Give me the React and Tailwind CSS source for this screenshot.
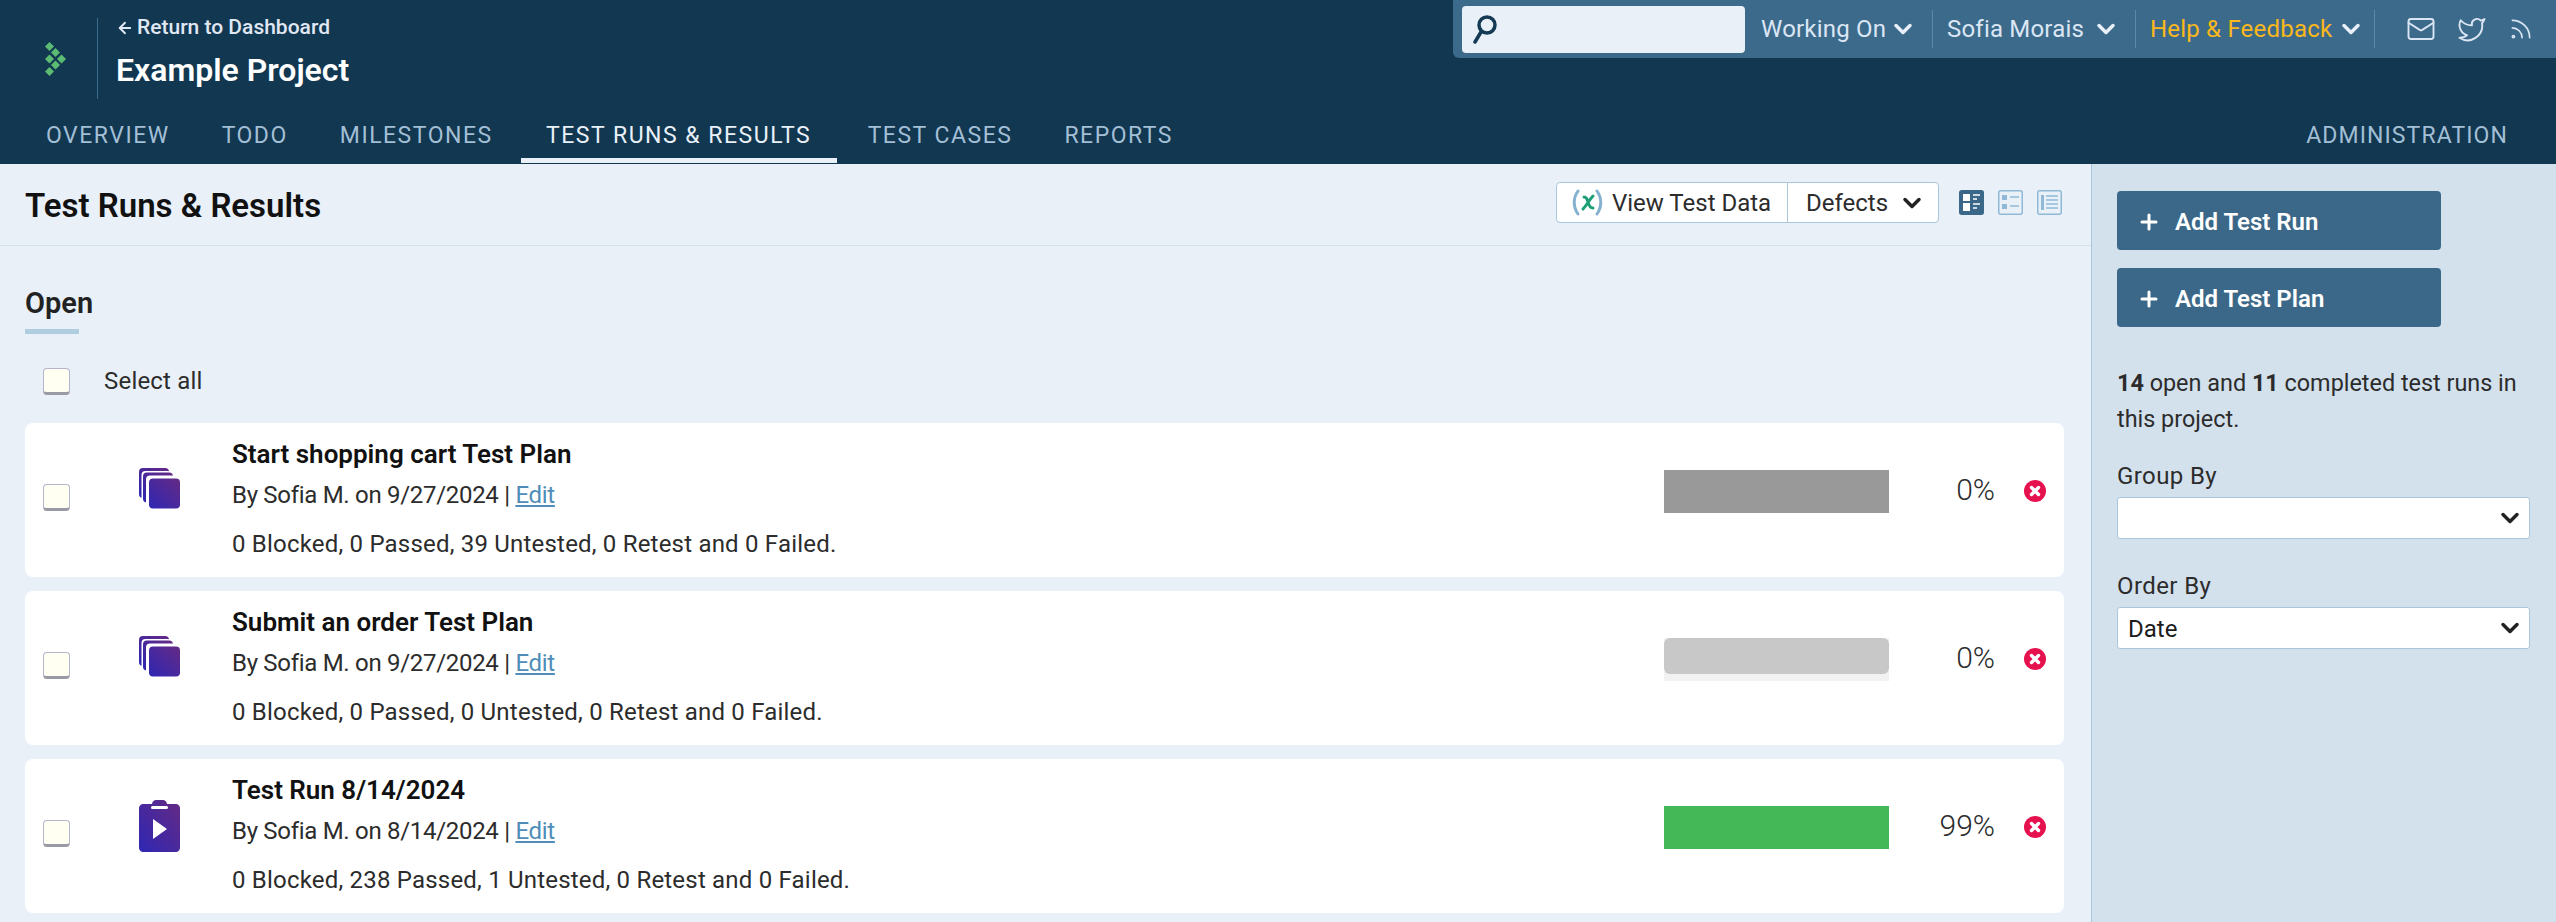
import React from 'react';
import { ChevronDown, Plus, Mail, Twitter, Rss, ArrowLeft } from 'lucide-react';

const tabs = ['OVERVIEW', 'TODO', 'MILESTONES', 'TEST RUNS & RESULTS', 'TEST CASES', 'REPORTS'];

const runs = [
  {
    title: 'Start shopping cart Test Plan',
    by: 'By Sofia M. on 9/27/2024',
    stats: '0 Blocked, 0 Passed, 39 Untested, 0 Retest and 0 Failed.',
    percent: '0%',
    type: 'plan',
    bar: 'dark',
  },
  {
    title: 'Submit an order Test Plan',
    by: 'By Sofia M. on 9/27/2024',
    stats: '0 Blocked, 0 Passed, 0 Untested, 0 Retest and 0 Failed.',
    percent: '0%',
    type: 'plan',
    bar: 'light',
  },
  {
    title: 'Test Run 8/14/2024',
    by: 'By Sofia M. on 8/14/2024',
    stats: '0 Blocked, 238 Passed, 1 Untested, 0 Retest and 0 Failed.',
    percent: '99%',
    type: 'run',
    bar: 'green',
  },
];

const Logo = () => (
  <svg width="21" height="34" viewBox="0 0 21 34" className="fill-[#5cbb72]">
    <path d="M4.5 0L9 4.5 4.5 9 0 4.5z" />
    <path d="M10.5 6L15 10.5 10.5 15 6 10.5z" />
    <path d="M4.5 12.5L9 17 4.5 21.5 0 17z" />
    <path d="M16.5 12.5L21 17 16.5 21.5 12 17z" />
    <path d="M10.5 18.5L15 23 10.5 27.5 6 23z" />
    <path d="M4.5 25L9 29.5 4.5 34 0 29.5z" />
  </svg>
);

const SearchIcon = () => (
  <svg width="30" height="30" viewBox="0 0 30 30" fill="none" stroke="#143a54" strokeWidth="3.5">
    <circle cx="17" cy="11" r="8" />
    <path d="M11 18L5 28" strokeLinecap="round" />
  </svg>
);

const FormulaIcon = () => (
  <svg width="31" height="27" viewBox="0 0 31 27" fill="none" strokeLinecap="round">
    <path d="M6 2C1 9 1 18 6 25" stroke="#85b1d0" strokeWidth="3" />
    <path d="M25 2c5 7 5 16 0 23" stroke="#85b1d0" strokeWidth="3" />
    <path d="M11 20C15 16 17 11 21 7M12 8c2 0 3 1 4 5s2 6 5 6" stroke="#1c9f76" strokeWidth="3" />
  </svg>
);

const PlanIcon = ({ id }) => (
  <svg width="41" height="41" viewBox="0 0 41 41">
    <defs>
      <linearGradient id={id} x1="1" y1="0" x2="0" y2="1">
        <stop offset="0" stopColor="#652a84" />
        <stop offset="1" stopColor="#2e27b4" />
      </linearGradient>
    </defs>
    <rect x="0" y="0" width="30" height="30" rx="4" fill={`url(#${id})`} />
    <rect x="2.5" y="3" width="30" height="32" rx="4" fill="#fff" />
    <rect x="4" y="4.5" width="30" height="30" rx="4" fill={`url(#${id})`} />
    <rect x="7" y="7.5" width="30" height="32" rx="4" fill="#fff" />
    <rect x="10" y="10.5" width="31" height="30" rx="4" fill={`url(#${id})`} />
  </svg>
);

const RunIcon = ({ id }) => (
  <svg width="41" height="52" viewBox="0 0 41 52">
    <defs>
      <linearGradient id={id} x1="1" y1="0" x2="0" y2="1">
        <stop offset="0" stopColor="#652a84" />
        <stop offset="1" stopColor="#2e27b4" />
      </linearGradient>
    </defs>
    <path
      d="M4 4h9c0-2 2-4 4-4h7c2 0 4 2 4 4h9c2 0 4 2 4 4v40c0 2-2 4-4 4H4c-2 0-4-2-4-4V8c0-2 2-4 4-4z"
      fill={`url(#${id})`}
    />
    <rect x="12" y="6" width="17" height="3" rx="1.5" fill="#fff" />
    <path d="M14 19l14 10-14 10z" fill="#fff" />
  </svg>
);

const CloseIcon = () => (
  <svg width="22" height="22" viewBox="0 0 22 22">
    <circle cx="11" cy="11" r="11" fill="#e6114f" />
    <path d="M7.5 7.5l7 7M14.5 7.5l-7 7" stroke="#fff" strokeWidth="3.4" strokeLinecap="round" />
  </svg>
);

const Checkbox = () => (
  <div className="h-[27px] w-[27px] rounded-[4px] border border-[#b4b4cc] border-b-[3px] border-b-[#9a9aa6] bg-[#fffff2]" />
);

const TopItem = ({ label, color, width }) => (
  <div className={`flex h-[38px] items-center justify-between border-r border-[#5d88a8] ${width}`}>
    <span className={`text-[24px] tracking-[0.2px] ${color}`}>{label}</span>
    <ChevronDown className="h-[28px] w-[28px] text-[#e9f0f8]" strokeWidth={3} />
  </div>
);

const ProgressBar = ({ kind }) => {
  if (kind === 'dark') return <div className="h-[43px] w-[225px] bg-[#999999]" />;
  if (kind === 'green') return <div className="h-[43px] w-[225px] bg-[#44b757]" />;
  return (
    <div className="h-[43px] w-[225px] bg-[#f2f2f2]">
      <div className="h-[36px] w-full rounded-[6px] bg-[#c8c8c8]" />
    </div>
  );
};

const RunCard = ({ run, index }) => (
  <div className="flex h-[154px] rounded-[8px] bg-white">
    <div className="ml-[18px] mt-[61px] w-[96px]">
      <Checkbox />
    </div>
    <div className={`w-[93px] ${run.type === 'plan' ? 'mt-[45px]' : 'mt-[41px]'}`}>
      {run.type === 'plan' ? <PlanIcon id={`plan-${index}`} /> : <RunIcon id={`run-${index}`} />}
    </div>
    <div className="flex-1 pt-[16px] text-[24px] tracking-[0.2px] text-[#2c2c2c]">
      <div className="h-[30px] text-[26px] font-semibold leading-[30px] tracking-normal text-[#111111]">{run.title}</div>
      <div className="mt-[11px] h-[30px] leading-[30px] tracking-[-0.3px]">
        {run.by} | <a href="#" className="text-[#4f8db8] underline">Edit</a>
      </div>
      <div className="mt-[19px] h-[30px] leading-[30px]">{run.stats}</div>
    </div>
    <div className="mt-[47px]">
      <ProgressBar kind={run.bar} />
    </div>
    <div className="mt-[49px] w-[106px] text-right text-[30px] font-light leading-[36px] text-[#2c2c2c]">{run.percent}</div>
    <div className="ml-[29px] mt-[57px] w-[40px]">
      <CloseIcon />
    </div>
  </div>
);

const SelectBox = ({ value }) => (
  <div className="flex h-[42px] w-[413px] items-center justify-between rounded-[3px] border border-[#a9c6dd] bg-white pl-[10px] pr-[5px] text-[24px] text-[#1c1c1c]">
    <span className="mt-[2px]">{value}</span>
    <ChevronDown className="h-[28px] w-[28px] text-[#222222]" strokeWidth={3} />
  </div>
);

const AddButton = ({ label }) => (
  <button className="flex h-[59px] w-[324px] items-center rounded-[4px] bg-[#3b6888] pl-[20px] pt-[2px] text-[24px] font-semibold text-white">
    <Plus className="mr-[14px] h-[24px] w-[24px]" strokeWidth={3} />
    {label}
  </button>
);

const ViewIcon = ({ active, children }) => (
  <svg width="25" height="25" viewBox="0 0 25 25">
    <rect
      x="0.75"
      y="0.75"
      width="23.5"
      height="23.5"
      rx="2"
      fill={active ? '#3b6888' : '#e9f0f8'}
      stroke={active ? '#3b6888' : '#8fb9d6'}
      strokeWidth="1.5"
    />
    {children}
  </svg>
);

const App = () => {
  return (
    <div className="h-[922px] overflow-hidden bg-[#e9f0f8] font-['Roboto',sans-serif]">
      {/* Top header */}
      <header className="h-[164px] bg-[#123751]">
        <div className="flex h-[114px] items-start">
          <div className="ml-[45px] mt-[42px]">
            <Logo />
          </div>
          <div className="ml-[31px] mt-[18px] h-[81px] border-l border-[#3c6a8b] pl-[18px]">
            <div className="flex h-[20px] items-center text-[21px] font-medium text-[#e0e8f4]">
              <ArrowLeft className="mr-[3px] h-[18px] w-[18px]" strokeWidth={2.5} />
              Return to Dashboard
            </div>
            <div className="mt-[14px] text-[32px] font-semibold leading-[36px] text-white">Example Project</div>
          </div>

          <div className="ml-auto flex h-[58px] w-[1103px] items-center rounded-bl-[6px] bg-[#3c6a8b] pl-[9px]">
            <div className="flex h-[47px] w-[283px] items-center rounded-[4px] bg-[#e9f0f8] pl-[8px]">
              <SearchIcon />
            </div>
            <div className="ml-[16px] flex text-[#dbe6f4]">
              <TopItem label="Working On" color="text-[#dbe6f4]" width="w-[172px] pr-[15px]" />
              <div className="w-[14px]" />
              <TopItem label="Sofia Morais" color="text-[#dbe6f4]" width="w-[189px] pr-[15px]" />
              <div className="w-[14px]" />
              <TopItem label="Help &amp; Feedback" color="text-[#fbb81b]" width="w-[225px] pr-[9px]" />
            </div>
            <div className="ml-[31px] flex items-center gap-[21px] text-[#dbe6f4]">
              <Mail className="h-[30px] w-[30px]" strokeWidth={1.5} />
              <Twitter className="h-[30px] w-[30px]" strokeWidth={1.5} />
              <Rss className="h-[26px] w-[26px]" strokeWidth={1.5} />
            </div>
          </div>
        </div>

        <nav className="flex h-[50px] pl-[20px] pr-[48px] text-[23px] tracking-[1.5px] text-[#a3bfd6]">
          {tabs.map((tab) =>
            tab === 'TEST RUNS & RESULTS' ? (
              <div key={tab} className="ml-[2px] mr-[5px] flex h-[49px] w-[316px] items-start justify-center border-b-[5px] border-[#e9f0f8] pt-[5px] text-[#e9f0f8]">
                {tab}
              </div>
            ) : (
              <div key={tab} className="px-[26px] pt-[5px]">{tab}</div>
            )
          )}
          <div className="ml-auto pt-[5px] tracking-[1.1px]">ADMINISTRATION</div>
        </nav>
      </header>

      <div className="flex h-[758px]">
        {/* Main column */}
        <main className="w-[2091px]">
          <div className="flex h-[82px] items-start justify-between border-b border-[#d3e1ed] pl-[25px] pr-[29px]">
            <h1 className="mt-[22px] text-[33px] font-semibold leading-[40px] text-[#111111]">Test Runs &amp; Results</h1>
            <div className="mt-[18px] flex items-center">
              <div className="flex h-[41px] w-[383px] items-center rounded-[4px] border border-[#a9c6dd] bg-white text-[24px] text-[#2c2c2c]">
                <div className="flex h-full w-[231px] items-center border-r border-[#a9c6dd] pl-[15px]">
                  <FormulaIcon />
                  <span className="ml-[9px]">View Test Data</span>
                </div>
                <div className="flex flex-1 items-center justify-between pl-[18px] pr-[12px]">
                  <span>Defects</span>
                  <ChevronDown className="h-[28px] w-[28px] text-[#222222]" strokeWidth={3} />
                </div>
              </div>
              <div className="ml-[20px] flex gap-[14px]">
                <ViewIcon active>
                  <path d="M4 4h7v7H4zM4 13h7v8H4z" fill="#fff" />
                  <path d="M14 5h7M14 9h4M14 14h7M14 18h4" stroke="#fff" strokeWidth="1.6" />
                </ViewIcon>
                <ViewIcon>
                  <path d="M4 5h5v5H4zM4 14h5v5H4z" fill="#8fb9d6" />
                  <path d="M12 7h9M12 16h9" stroke="#8fb9d6" strokeWidth="1.6" />
                </ViewIcon>
                <ViewIcon>
                  <path d="M4 5h3v15H4z" fill="#8fb9d6" />
                  <path d="M9 6h12M9 10h12M9 14h12M9 18h12" stroke="#8fb9d6" strokeWidth="1.6" />
                </ViewIcon>
              </div>
            </div>
          </div>

          <div className="pl-[25px] pr-[27px]">
            <h2 className="mt-[39px] h-[36px] text-[29px] font-semibold leading-[36px] text-[#222222]">Open</h2>
            <div className="mt-[8px] h-[5px] w-[54px] bg-[#b0cde0]" />
            <div className="ml-[18px] mt-[29px] flex items-center">
              <Checkbox />
              <span className="ml-[34px] text-[24px] tracking-[0.2px] text-[#2c2c2c]">Select all</span>
            </div>
            <div className="mt-[24px] flex flex-col gap-[14px]">
              {runs.map((run, i) => (
                <RunCard key={run.title} run={run} index={i} />
              ))}
            </div>
          </div>
        </main>

        {/* Right sidebar */}
        <aside className="flex-1 border-l border-[#a9c6dd] bg-[#d3e1ed] pl-[25px] pt-[27px] text-[24px] text-[#2c2c2c]">
          <div className="flex flex-col gap-[18px]">
            <AddButton label="Add Test Run" />
            <AddButton label="Add Test Plan" />
          </div>
          <div className="mt-[38px] w-[420px] text-[23.4px] leading-[36px]">
            <div>
              <b className="font-bold">14</b> open and <b className="font-bold">11</b> completed test runs in
            </div>
            <div>this project.</div>
          </div>
          <div className="mt-[24px] leading-[30px] tracking-[0.4px]">Group By</div>
          <div className="mt-[6px]"><SelectBox value="" /></div>
          <div className="mt-[32px] leading-[30px] tracking-[0.4px]">Order By</div>
          <div className="mt-[6px]"><SelectBox value="Date" /></div>
        </aside>
      </div>
    </div>
  );
};

export default App;
